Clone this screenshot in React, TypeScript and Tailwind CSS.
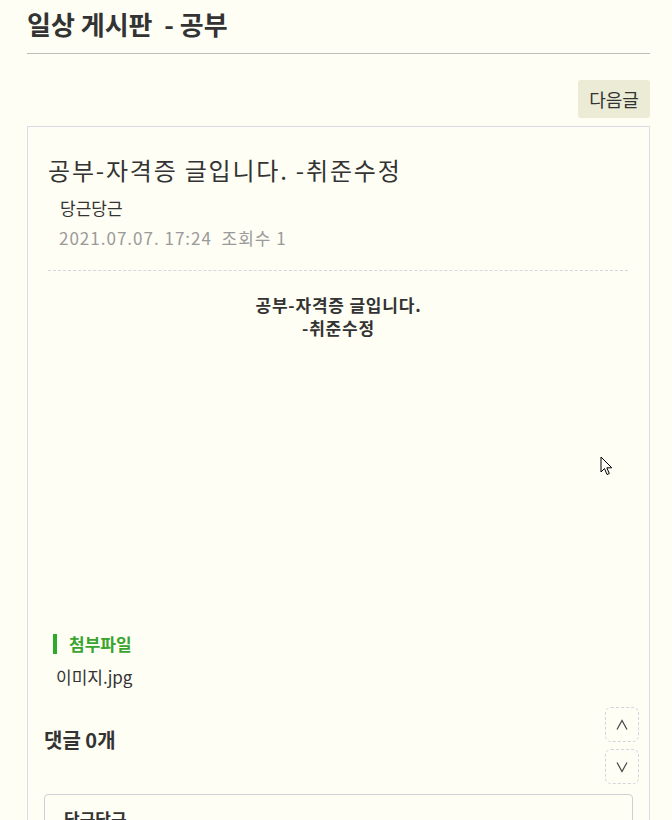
import React from 'react'

const font = { fontFamily: '"Noto Sans CJK KR", "Noto Sans", sans-serif' }

const CommentArrow = ({ dir }: { dir: 'up' | 'down' }) => (
    <button className="w-[34px] h-[35px] flex items-center justify-center rounded-[6px] border border-dashed border-[#d4d4dc] text-[#444]">
        <svg width="14" height="12" viewBox="0 0 14 12" fill="none" stroke="currentColor" strokeWidth="1.2">
            {dir === 'up' ? <path d="M2 10.5 L7 1.5 L12 10.5" /> : <path d="M2 1.5 L7 10.5 L12 1.5" />}
        </svg>
    </button>
)

const App = () => {
    return (
        <div className="relative min-h-screen bg-[#fefef4] text-[#333]" style={font}>
            <div className="ml-[27px] w-[623px]">
                {/* header */}
                <div className="h-[54px] flex items-center border-b border-[#bdbdb8]">
                    <h1 className="text-[26px] font-semibold leading-[30px] -mt-[5px]">일상 게시판&nbsp; - 공부</h1>
                </div>

                <div className="mt-[26px] flex justify-end">
                    <button className="w-[72px] h-[38px] bg-[#ebebd6] rounded-[3px] text-[18px] text-[#333]">다음글</button>
                </div>

                {/* post card */}
                <div className="mt-[8px] border border-[#dcdce6] px-[16px] pb-[40px]">
                    <div className="pl-[4px] pt-[27px]">
                        <h2 className="text-[24px] leading-[32px] font-normal tracking-[1.8px]">공부-자격증 글입니다. -취준수정</h2>
                        <div className="mt-[10px] pl-[12px] text-[17px] leading-[24px]">당근당근</div>
                        <div className="mt-[6px] pl-[11px] text-[17px] leading-[24px] tracking-[1px] text-[#9a9a9a]">
                            2021.07.07. 17:24&nbsp; 조회수 1
                        </div>
                    </div>

                    <div className="mt-[20px] ml-[4px] mr-[5px] border-t border-dashed border-[#d6d6dc]" />

                    <div className="mt-[22px] min-h-[341px] text-center text-[17px] leading-[23px] tracking-[0.8px] font-semibold">
                        <p>공부-자격증 글입니다.</p>
                        <p>-취준수정</p>
                    </div>

                    {/* attachments */}
                    <div className="pl-[9px]">
                        <div className="flex items-center h-[20px]">
                            <span className="w-[4px] h-[20px] bg-[#2eaa2a]" />
                            <span className="ml-[12px] text-[17px] font-semibold text-[#3aa42e]">첨부파일</span>
                        </div>
                        <div className="mt-[11px] ml-[3px] text-[17px] leading-[24px] text-[#333]">이미지.jpg</div>
                    </div>

                    {/* comments */}
                    <div className="mt-[18px] flex justify-between items-start -mr-[6px]">
                        <div className="mt-[19px] text-[20px] leading-[28px] font-semibold">댓글 0개</div>
                        <div className="flex flex-col gap-[7px]">
                            <CommentArrow dir="up" />
                            <CommentArrow dir="down" />
                        </div>
                    </div>

                    <div className="mt-[10px] border border-[#cfcfd4] rounded-[4px] px-[19px] pt-[12px] pb-[60px]">
                        <div className="text-[17px] leading-[24px] font-semibold">당근당근</div>
                    </div>
                </div>
            </div>

            {/* mouse cursor */}
            <svg className="absolute left-[600px] top-[456px]" width="14" height="20" viewBox="0 0 14 20">
                <path d="M1 1 L1 16 L4.5 12.5 L7 18.5 L9.3 17.5 L6.8 11.8 L11.8 11.8 Z" fill="#fff" stroke="#000" strokeWidth="1" strokeLinejoin="round" />
            </svg>
        </div>
    )
}

export default App
